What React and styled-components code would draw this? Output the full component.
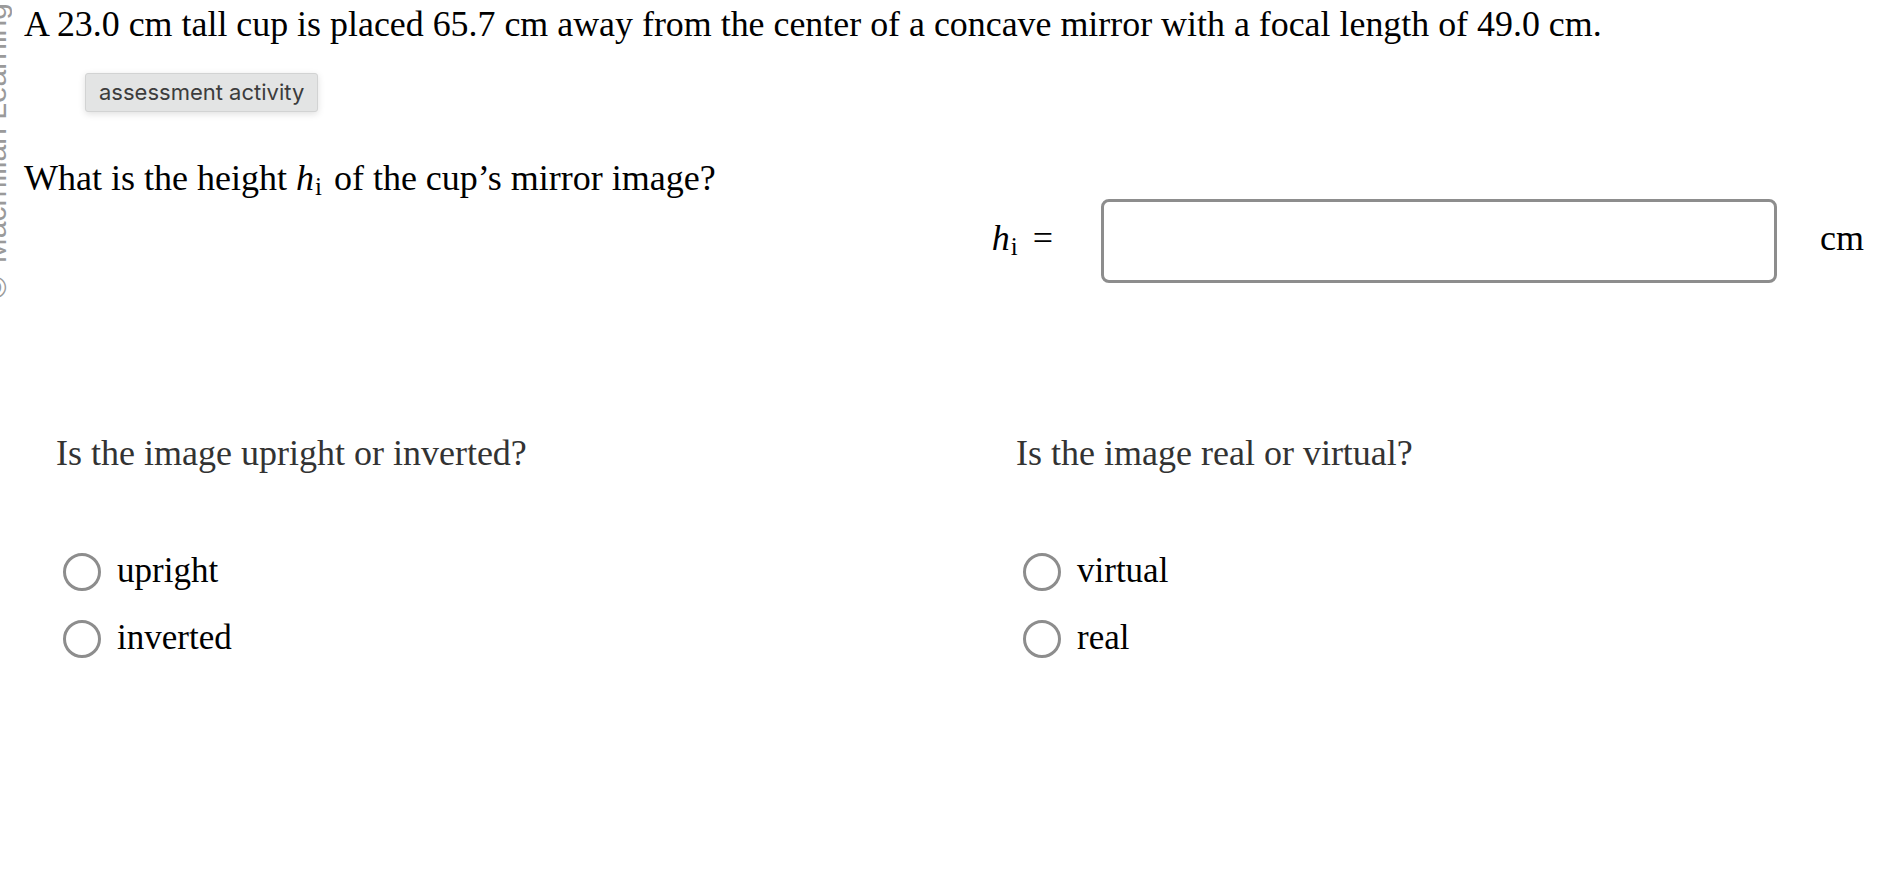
import React from "react";
import { styled, createGlobalStyle } from "styled-components";

const GlobalStyle = createGlobalStyle`
  html, body {
    margin: 0;
    padding: 0;
    background: #ffffff;
    overflow: hidden;
  }
`;

const Page = styled.main`
  position: relative;
  width: 1878px;
  height: 872px;
  box-sizing: border-box;
  padding: 4px 14px 0 24px;
  font-family: "Liberation Serif", "Times New Roman", serif;
  font-size: 36px;
  line-height: 40px;
  color: #000;
`;

// copyright strip running up the left edge, mostly off-screen
const Watermark = styled.div`
  position: absolute;
  top: 3px;
  left: -19px;
  writing-mode: vertical-rl;
  transform: rotate(180deg);
  font-family: "Liberation Sans", Arial, sans-serif;
  font-size: 30px;
  line-height: 30px;
  color: #9a9a9a;
  white-space: nowrap;
`;

const Intro = styled.p`
  margin: 0;
  font-size: 35.9px;
`;

const Badge = styled.div`
  display: inline-flex;
  align-items: center;
  box-sizing: border-box;
  height: 39px;
  margin: 29px 0 0 61px;
  padding: 0 13px 1px 13px;
  background: #e3e4e4;
  border: 1px solid #d2d3d3;
  border-radius: 3px;
  box-shadow: 0 2px 7px rgba(0, 0, 0, 0.13);
  font-family: Inter, "Liberation Sans", sans-serif;
  font-size: 22px;
  line-height: 24px;
  color: #3c3c3c;
`;

const Prompt = styled.p`
  margin: 46px 0 0 0;
`;

const Var = styled.span`
  font-style: italic;
  sub {
    font-style: normal;
    font-size: 25px;
    vertical-align: -5px;
    line-height: 0;
    margin: 0 ${(p) => p.$after || 0}px 0 1px;
  }
`;

const AnswerRow = styled.div`
  display: flex;
  justify-content: flex-end;
  align-items: center;
  margin-top: 1px;
`;

const RowText = styled.span`
  padding-bottom: 7px;
  margin-right: ${(p) => p.$gap}px;
`;

const AnswerBox = styled.input`
  box-sizing: border-box;
  width: 676px;
  height: 84px;
  border: 3.5px solid #8d8d8d;
  border-radius: 8px;
  background: #fff;
  margin-right: 43px;
  outline: none;
`;

const Columns = styled.div`
  display: grid;
  grid-template-columns: 960px 1fr;
  margin: 150px 0 0 32px;
`;

const Question = styled.section`
  display: flex;
  flex-direction: column;
`;

const QuestionHead = styled.p`
  margin: 0 0 74px 0;
  color: #333;
`;

const Options = styled.div`
  display: flex;
  flex-direction: column;
  gap: 17px;
  padding-left: 7px;
`;

const Option = styled.label`
  display: flex;
  align-items: center;
  gap: 16px;
  height: 50px;
  cursor: pointer;
`;

const Circle = styled.span`
  box-sizing: border-box;
  width: 38px;
  height: 38px;
  border: 3.5px solid #8d8d8d;
  border-radius: 50%;
  background: #fff;
  flex: none;
`;

const OptionText = styled.span`
  font-size: 35px;
  padding-bottom: 3px;
`;

const questions = [
  { head: "Is the image upright or inverted?", options: ["upright", "inverted"] },
  { head: "Is the image real or virtual?", options: ["virtual", "real"] },
];

export default function App() {
  return (
    <>
      <GlobalStyle />
      <Page>
        <Watermark>© Macmillan Learning</Watermark>
        <Intro>
          A 23.0 cm tall cup is placed 65.7 cm away from the center of a concave
          mirror with a focal length of 49.0 cm.
        </Intro>
        <Badge>assessment activity</Badge>
        <Prompt>
          What is the height{" "}
          <Var $after={3}>
            h<sub>i</sub>
          </Var>{" "}
          of the cup’s mirror image?
        </Prompt>
        <AnswerRow>
          <RowText $gap={15}>
            <Var>
              h<sub>i</sub>
            </Var>
          </RowText>
          <RowText $gap={48}>=</RowText>
          <AnswerBox type="text" aria-label="h_i" />
          <RowText $gap={0}>cm</RowText>
        </AnswerRow>
        <Columns>
          {questions.map((q) => (
            <Question key={q.head}>
              <QuestionHead>{q.head}</QuestionHead>
              <Options>
                {q.options.map((o) => (
                  <Option key={o}>
                    <Circle />
                    <OptionText>{o}</OptionText>
                  </Option>
                ))}
              </Options>
            </Question>
          ))}
        </Columns>
      </Page>
    </>
  );
}
